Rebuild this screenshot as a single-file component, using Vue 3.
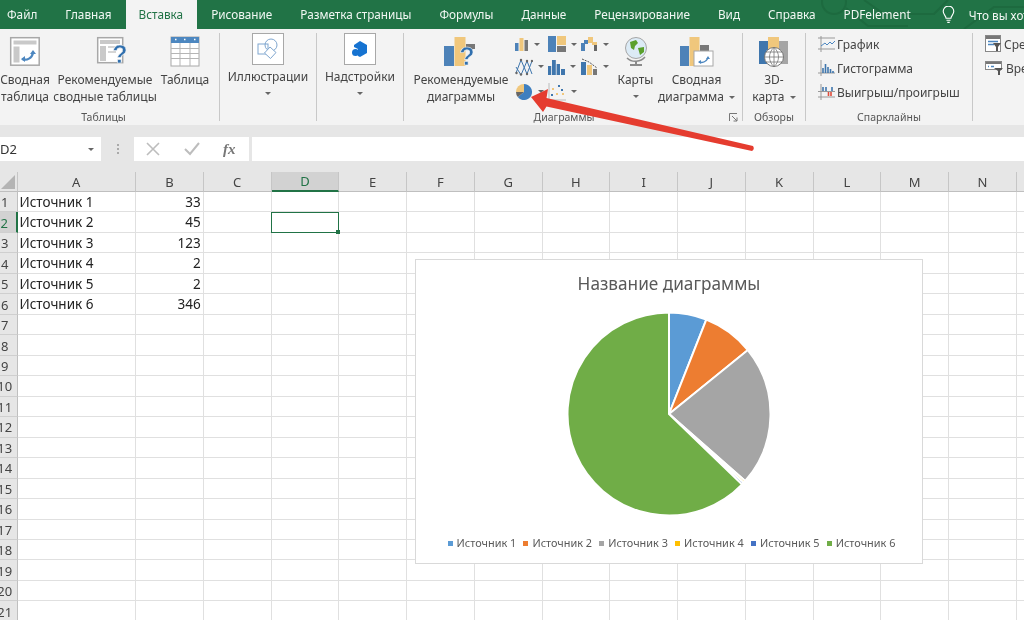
<script setup>
const tabs = ['Главная', 'Вставка', 'Рисование', 'Разметка страницы', 'Формулы', 'Данные', 'Рецензирование', 'Вид', 'Справка', 'PDFelement']
const columns = ['A', 'B', 'C', 'D', 'E', 'F', 'G', 'H', 'I', 'J', 'K', 'L', 'M', 'N', '']
const sheetData = [
  ['Источник 1', 33],
  ['Источник 2', 45],
  ['Источник 3', 123],
  ['Источник 4', 2],
  ['Источник 5', 2],
  ['Источник 6', 346]
]
const rows = Array.from({ length: 21 }, (_, i) => ({
  n: i + 1,
  a: sheetData[i] ? sheetData[i][0] : '',
  b: sheetData[i] ? sheetData[i][1] : ''
}))
const colors = ['#5b9bd5', '#ed7d31', '#a5a5a5', '#ffc000', '#4472c4', '#70ad47']
const total = sheetData.reduce((s, r) => s + r[1], 0)
let acc = 0
const slices = sheetData.map((r, i) => {
  const a0 = (acc / total) * Math.PI * 2
  acc += r[1]
  const a1 = (acc / total) * Math.PI * 2
  const R = 101.5
  const p = (a) => `${(110 + R * Math.sin(a)).toFixed(2)} ${(110 - R * Math.cos(a)).toFixed(2)}`
  return {
    d: `M110 110L${p(a0)}A${R} ${R} 0 ${a1 - a0 > Math.PI ? 1 : 0} 1 ${p(a1)}Z`,
    color: colors[i]
  }
})
const legend = sheetData.map((r, i) => ({ name: r[0], color: colors[i] }))
</script>

<template>
  <div class="app">
    <nav class="tabs">
      <span class="tab file">Файл</span>
      <span v-for="t in tabs" :key="t" class="tab" :class="{ active: t === 'Вставка' }">{{ t }}</span>
      <svg class="bulb" width="13" height="18" viewBox="0 0 16 22" fill="none" stroke="#fff" stroke-width="1.400">
        <path d="M5 15c0-3-3.500-4.500-3.500-8.500a6.500 6.500 0 0 1 13 0C14.500 10.500 11 12 11 15z" />
        <path d="M5.500 17.500h5M6.500 20h3" />
      </svg>
      <span class="tell">Что вы хотите сделать?</span>
      <svg class="circuit" width="230" height="29" viewBox="0 0 230 29" fill="none" stroke="#1d6a3f" stroke-width="2">
        <circle cx="40" cy="2" r="12" />
        <path d="M52 8l22 18h40M70 0l20 14h50l14-14M170 29l30-22h30" />
      </svg>
    </nav>

    <section class="ribbon">
      <div class="group g-tables">
        <div class="body">
          <div class="btn b-pivot">
            <svg class="icon" width="32" height="31" viewBox="0 0 32 31">
              <rect x="1.700" y="1.700" width="28.500" height="27.500" fill="#fff" stroke="#a8a8a8" stroke-width="1.500" />
              <rect x="4.500" y="4.500" width="23" height="4" fill="#c9c9c9" />
              <rect x="4.500" y="10.500" width="6" height="16" fill="#c9c9c9" />
              <path d="M13 23c5 2 10-1 11-6" fill="none" stroke="#4d87c0" stroke-width="2.200" />
              <path d="M21 18l3-4 3 4zM16 20l-4 3 4 3z" fill="#4d87c0" />
            </svg>
            <span>Сводная</span><span>таблица</span>
          </div>
          <div class="btn b-recpivot">
            <svg class="icon" width="34" height="31" viewBox="0 0 34 31">
              <rect x="1.700" y="1.700" width="25" height="25" fill="#fff" stroke="#a8a8a8" stroke-width="1.500" />
              <rect x="4" y="4" width="20" height="4" fill="#c9c9c9" />
              <rect x="4" y="10" width="6" height="15" fill="#c9c9c9" />
              <rect x="12" y="10" width="10" height="2" fill="#d5d5d5" />
              <rect x="12" y="15" width="8" height="2" fill="#d5d5d5" />
              <text x="24" y="27" text-anchor="middle" class="qm">?</text>
            </svg>
            <span>Рекомендуемые</span><span>сводные таблицы</span>
          </div>
          <div class="btn b-table">
            <svg class="icon" width="30" height="31" viewBox="0 0 30 31">
              <rect x="1" y="1" width="28" height="29" fill="#fff" stroke="#a8a8a8" />
              <rect x="1" y="1" width="28" height="6" fill="#4d87c0" />
              <path d="M1 12.500h28M1 17.500h28M1 22.500h28M10 7v23M20 7v23" stroke="#b5b5b5" fill="none" />
              <path d="M5 3.500h1.500M14 3.500h1.500M24 3.500h1.500" stroke="#fff" fill="none" stroke-width="1.500" />
            </svg>
            <span>Таблица</span>
          </div>
        </div>
        <div class="label l-tables">Таблицы</div>
      </div>
      <i class="sep"></i>

      <div class="group g-ill">
        <div class="body">
          <div class="btn boxed">
            <span class="box">
              <svg width="24" height="24" viewBox="0 0 24 24" fill="none" stroke="#7fa6cf" stroke-width="1">
                <rect x="2" y="7" width="10" height="10" />
                <circle cx="15" cy="8" r="6" />
                <path d="M14 10l6 5.500-5.500 6-6-5.500z" fill="#fff" />
              </svg>
            </span>
            <span>Иллюстрации</span>
            <i class="caret cap"></i>
          </div>
        </div>
      </div>
      <i class="sep"></i>

      <div class="group g-add">
        <div class="body">
          <div class="btn boxed">
            <span class="box">
              <svg width="18" height="18" viewBox="0 0 18 18" fill="#1673d1">
                <path d="M9 1l7 4v8l-7 4-2-1V9L3 7V5z" />
                <circle cx="4.500" cy="12.500" r="3.500" />
              </svg>
            </span>
            <span>Надстройки</span>
            <i class="caret cap"></i>
          </div>
        </div>
      </div>
      <i class="sep"></i>

      <div class="group g-charts">
        <div class="body">
          <div class="btn b-recchart">
            <svg class="icon" width="34" height="31" viewBox="0 0 34 31">
              <rect x="0" y="10" width="10" height="20" fill="#4d82b8" />
              <rect x="10.500" y="1" width="11" height="29" fill="#f0c77c" />
              <rect x="22" y="8" width="9" height="5" fill="#777" />
              <text x="23" y="29" text-anchor="middle" class="qm">?</text>
            </svg>
            <span>Рекомендуемые</span><span>диаграммы</span>
          </div>
          <div class="mini-grid">
            <div class="mini">
              <svg width="14" height="15" viewBox="0 0 14 15"><rect y="6" width="3.500" height="8" fill="#4d82b8" /><rect x="4.500" y="1" width="4" height="13" fill="#f0c77c" /><rect x="9.500" y="3" width="3.500" height="11" fill="#777" /></svg>
              <i class="caret"></i>
            </div>
            <div class="mini">
              <svg width="18" height="16" viewBox="0 0 18 16"><rect width="8" height="16" fill="#4d82b8" /><rect x="9" width="9" height="9" fill="#f0c77c" /><rect x="9" y="10" width="9" height="6" fill="#777" /></svg>
              <i class="caret"></i>
            </div>
            <div class="mini">
              <svg width="17" height="16" viewBox="0 0 17 16"><rect y="7" width="4" height="8" fill="#4d82b8" /><rect x="3" y="4" width="4" height="4" fill="#4d82b8" /><rect x="7" y="1" width="5" height="6" fill="#f0c77c" /><rect x="11" y="6" width="5" height="3" fill="#f0c77c" /><rect x="13" y="9" width="3" height="6" fill="#666" /></svg>
              <i class="caret"></i>
            </div>
            <div class="mini">
              <svg width="18" height="18" viewBox="0 0 18 18" fill="none" stroke="#3f76ad" stroke-width="1">
                <path d="M1 15L6 2l6 14 5-13M1 9l5 8 6-14 5 13" />
                <g fill="#666" stroke="none"><circle cx="1.500" cy="15" r="1.200" /><circle cx="6" cy="2" r="1.200" /><circle cx="12" cy="16" r="1.200" /><circle cx="17" cy="3" r="1.200" /><circle cx="6" cy="16.500" r="1.200" /><circle cx="12" cy="3" r="1.200" /></g>
              </svg>
              <i class="caret"></i>
            </div>
            <div class="mini">
              <svg width="17" height="16" viewBox="0 0 17 16" fill="#3f76ad"><rect y="7" width="3.200" height="9" /><rect x="4" y="1" width="3.800" height="15" /><rect x="8.600" y="5" width="3.400" height="11" /><rect x="13" y="10" width="4" height="6" /></svg>
              <i class="caret"></i>
            </div>
            <div class="mini">
              <svg width="17" height="17" viewBox="0 0 17 17"><rect y="4" width="5" height="13" fill="#3f76ad" /><rect x="6" y="7" width="5" height="10" fill="#f0c77c" /><rect x="12" y="11" width="4" height="6" fill="#777" /><path d="M1 1l7 3 8 6" stroke="#555" fill="none" stroke-dasharray="2 1" /></svg>
              <i class="caret"></i>
            </div>
            <div class="mini">
              <svg width="18" height="18" viewBox="0 0 18 18">
                <path d="M9 9V1a8 8 0 1 1-6.200 13z" fill="#3f7fbf" />
                <path d="M9 9H1a8 8 0 0 1 8-8z" fill="#f0c77c" />
                <path d="M9 9l-6.200 5A8 8 0 0 1 1 9z" fill="#666" />
              </svg>
              <i class="caret"></i>
            </div>
            <div class="mini">
              <svg width="18" height="18" viewBox="0 0 18 18">
                <path d="M1 0v17h17" stroke="#bbb" fill="none" />
                <g fill="#f0c77c"><rect x="4" y="5" width="2" height="2" /><rect x="8" y="10" width="2" height="2" /><rect x="14" y="10" width="2" height="2" /></g>
                <g fill="#3f76ad"><rect x="3" y="11" width="2" height="2" /><rect x="10" y="2" width="2" height="2" /><rect x="13" y="6" width="2" height="2" /></g>
              </svg>
              <i class="caret"></i>
            </div>
          </div>
          <div class="btn b-maps">
            <svg class="icon" width="26" height="31" viewBox="0 0 26 31">
              <circle cx="13" cy="12" r="10.500" fill="#dcebf6" stroke="#a6a6a6" />
              <path d="M7 6l6-2 2 3-3 3-1 4-3-2zM15 12l6-1 0 5-4 3z" fill="#5aa02c" />
              <path d="M4 22c5 5 14 4 18-1" fill="none" stroke="#8a8a8a" stroke-width="1.500" />
              <path d="M13 25v3M7 29h12" stroke="#8a8a8a" stroke-width="2" />
            </svg>
            <span>Карты</span>
            <i class="caret cap2"></i>
          </div>
          <div class="btn b-pchart">
            <svg class="icon" width="34" height="31" viewBox="0 0 34 31">
              <rect x="0" y="10" width="9" height="20" fill="#4d82b8" />
              <rect x="9.500" y="1" width="10" height="29" fill="#f0c77c" />
              <rect x="20" y="9" width="9" height="6" fill="#777" />
              <rect x="14" y="15" width="19" height="15" fill="#fff" stroke="#a8a8a8" />
              <path d="M19 26c3 1 7 0 9-4" fill="none" stroke="#4d87c0" stroke-width="1.600" />
              <path d="M26 23l2-3 2 3zM21 24l-3 2 3 2z" fill="#4d87c0" />
            </svg>
            <span>Сводная</span>
            <span>диаграмма <i class="caret inl"></i></span>
          </div>
        </div>
        <div class="label-row">
          <div class="label l-charts">Диаграммы</div>
          <svg class="launcher" width="9" height="9" viewBox="0 0 9 9" fill="none" stroke="#777"><path d="M.5 8V.5H8M3 3l5 5M8 4.500V8H4.500" /></svg>
        </div>
      </div>
      <i class="sep"></i>

      <div class="group g-tours">
        <div class="body">
          <div class="btn b-tours">
            <svg class="icon" width="32" height="31" viewBox="0 0 32 31">
              <rect x="1" y="5" width="9" height="23" fill="#3f76ad" />
              <rect x="10" y="1" width="11" height="20" fill="#f0c77c" />
              <rect x="21" y="5" width="9" height="23" fill="#a5a5a5" />
              <circle cx="16" cy="21" r="9.500" fill="#fff" stroke="#777" />
              <path d="M6.500 21h19M16 11.500v19M8 16h16M8 26h16M16 11.500c-6 5-6 14 0 19M16 11.500c6 5 6 14 0 19" fill="none" stroke="#777" stroke-width=".8" />
            </svg>
            <span>3D-</span>
            <span>карта <i class="caret inl"></i></span>
          </div>
        </div>
        <div class="label">Обзоры</div>
      </div>
      <i class="sep"></i>

      <div class="group g-spark">
        <div class="body list">
          <div class="line">
            <svg width="17" height="16" viewBox="0 0 17 16" fill="none"><path d="M3 0v16M0 13h17M0 2h17" stroke="#999" /><path d="M3 10l4-3 2 2 3-3 2 2 3-3" stroke="#4d87c0" /></svg>
            <span>График</span>
          </div>
          <div class="line">
            <svg width="17" height="16" viewBox="0 0 17 16" fill="none"><path d="M3 0v16M0 13h17" stroke="#999" /><path d="M5 13V8M7.500 13V4M10 13V7M12.500 13V9M15 13v-2" stroke="#3f76ad" stroke-width="1.600" /></svg>
            <span>Гистограмма</span>
          </div>
          <div class="line">
            <svg width="17" height="16" viewBox="0 0 17 16" fill="none"><path d="M3 0v16M0 13h17M0 7.500h17" stroke="#999" /><path d="M5 3v4M8 3v4M14 3v4" stroke="#3f76ad" stroke-width="1.600" /><path d="M10.500 8v4M13 8v4" stroke="#e04b3a" stroke-width="1.600" /></svg>
            <span>Выигрыш/проигрыш</span>
          </div>
        </div>
        <div class="label">Спарклайны</div>
      </div>
      <i class="sep"></i>

      <div class="group g-filter">
        <div class="body list">
          <div class="line">
            <svg width="17" height="18" viewBox="0 0 17 18" fill="none"><rect x=".5" y=".5" width="15" height="16" fill="#fff" stroke="#888" /><rect x="1" y="1" width="14" height="3" fill="#777" /><path d="M3 6.500h10M3 9.500h6" stroke="#4d87c0" stroke-width="1.500" /><path d="M8 8h8l-3 4v4h-2v-4z" fill="#555" /></svg>
            <span>Срез</span>
          </div>
          <div class="line">
            <svg width="19" height="14" viewBox="0 0 19 14" fill="none"><rect x=".5" y=".5" width="16" height="8" fill="#fff" stroke="#888" /><rect x="1" y="1" width="15" height="2" fill="#777" /><path d="M3 5.500h1M6 5.500h3" stroke="#4d87c0" stroke-width="1.500" /><path d="M9 7h9l-3 3v4h-2v-4z" fill="#555" /></svg>
            <span>Временная шкала</span>
          </div>
        </div>
      </div>
    </section>

    <section class="formula">
      <div class="name">D2<i class="caret"></i></div>
      <div class="dots"><i></i><i></i><i></i></div>
      <div class="fx-box">
        <svg width="14" height="14" viewBox="0 0 14 14" fill="none" stroke="#bdbdbd" stroke-width="1.600"><path d="M1 1l12 12M13 1L1 13" /></svg>
        <svg width="16" height="14" viewBox="0 0 16 14" fill="none" stroke="#bdbdbd" stroke-width="2"><path d="M1 7l5 5L15 1" /></svg>
        <span class="fx">fx</span>
      </div>
      <div class="input"></div>
    </section>

    <section class="sheet">
      <div class="hd corner"><i></i></div>
      <div v-for="c in columns" :key="c" class="hd col" :class="{ sel: c === 'D' }">{{ c }}</div>
      <template v-for="r in rows" :key="r.n">
        <div class="hd num" :class="{ sel: r.n === 2 }">{{ r.n }}</div>
        <div class="cell">{{ r.a }}</div>
        <div class="cell right">{{ r.b }}</div>
        <div v-for="c in columns.slice(2)" :key="c" class="cell" :class="{ active: r.n === 2 && c === 'D' }"></div>
      </template>
    </section>

    <figure class="chart">
      <figcaption>Название диаграммы</figcaption>
      <svg class="pie" width="220" height="220" viewBox="0 0 220 220">
        <path v-for="(s, i) in slices" :key="i" :d="s.d" :fill="s.color" stroke="#fff" stroke-width="2" />
      </svg>
      <div class="legend">
        <span v-for="l in legend" :key="l.name"><i :style="{ background: l.color }"></i>{{ l.name }}</span>
      </div>
    </figure>

    <svg class="arrow" width="1024" height="170" viewBox="0 0 1024 170">
      <path d="M531 97L548 89L546.500 98L753 146Q755 149 752 151L546.500 106.500L543 112Z" fill="#e53c2f" />
    </svg>
  </div>
</template>

<style scoped>
.app {
  position: relative;
  width: 1024px;
  height: 620px;
  overflow: hidden;
  background: #fff;
  font-family: "Noto Sans", "Open Sans", sans-serif;
  color: #444;
  filter: blur(0.4px);
}
i { display: block; }

.tabs {
  position: relative;
  display: flex;
  align-items: center;
  height: 29px;
  padding-left: 7px;
  background: #217346;
  color: #f1f7f3;
  font-size: 11.750px;
  white-space: nowrap;
}
.tab { padding: 0 14px; line-height: 29px; position: relative; z-index: 1; flex: none; }
.tab.file { padding: 0 14px 0 0; }
.tab.active { background: #f3f3f3; color: #217346; padding: 0 14px 0 13px; }
.bulb { margin-left: 17px; position: relative; z-index: 1; flex: none; }
.tell { margin-left: 14px; position: relative; z-index: 1; flex: none; }
.circuit { position: absolute; right: 0; top: 0; }

.ribbon {
  display: flex;
  height: 96px;
  background: #f3f3f3;
  color: #444;
  font-size: 12px;
  line-height: 17px;
  white-space: nowrap;
}
.sep { width: 1px; margin: 4px 0 4px; background: #c8c8c8; flex: none; }
.group { display: flex; flex-direction: column; flex: none; overflow: hidden; }
.body { flex: 1; display: flex; min-height: 0; }
.label {
  text-align: center;
  font-size: 10.500px;
  line-height: 14px;
  color: #555;
  padding-top: 4px;
  height: 19px;
  box-sizing: border-box;
}
.g-tables { width: 219px; }
.g-ill { width: 96px; }
.g-add { width: 86px; }
.g-charts { width: 338px; }
.g-tours { width: 62px; }
.g-spark { width: 166px; }
.g-filter { flex: 1; }
.l-tables { padding-right: 12px; }

.btn { display: flex; flex-direction: column; align-items: center; flex: none; padding-top: 7px; }
.icon { display: block; margin-bottom: 4px; flex: none; height: 31px; }
.b-pivot { width: 50px; }
.b-recpivot { width: 110px; }
.b-table { width: 50px; }
.b-recpivot .icon { margin-left: 16px; }
.b-recchart { width: 102px; margin-left: 6px; }
.b-maps { width: 44px; }
.b-pchart { width: 78px; }
.b-tours { width: 62px; }
.qm { font: 700 25px "Liberation Sans", sans-serif; fill: #2f6fae; stroke: #f3f3f3; stroke-width: .6px; }

.boxed { width: 100%; padding-top: 4px; }
.box {
  display: flex;
  align-items: center;
  justify-content: center;
  width: 32px;
  height: 32px;
  background: #fff;
  border: 1.500px solid #a8a8a8;
  box-sizing: border-box;
  margin-bottom: 3px;
}
.caret { width: 0; height: 0; border: 3px solid transparent; border-top: 3.500px solid #666; border-bottom: 0; }
.cap { margin-top: 7px; }
.cap2 { margin-top: 7px; }
.caret.inl { display: inline-block; vertical-align: middle; margin-left: 2px; }

.mini-grid {
  display: grid;
  grid-template-columns: repeat(3, 33px);
  grid-template-rows: 22px 23px 27px;
  margin: 4px 0 0 2.500px;
  flex: none;
  width: 99px;
}
.mini { display: flex; align-items: center; gap: 5px; }
.mini svg { flex: none; }
.label-row { display: flex; align-items: flex-start; height: 19px; }
.l-charts { flex: 1; }
.launcher { margin: 7px 4px 0 5px; }

.list { flex-direction: column; padding: 3px 0 0 12px; }
.line { display: flex; align-items: center; gap: 2px; height: 24px; }
.line svg { flex: none; }

.formula {
  display: flex;
  align-items: center;
  height: 47px;
  padding: 12px 0 11px;
  box-sizing: border-box;
  background: #e6e6e6;
}
.name {
  width: 101px;
  height: 24px;
  background: #fff;
  font-size: 13px;
  color: #333;
  display: flex;
  align-items: center;
  justify-content: space-between;
  padding-right: 7px;
  box-sizing: border-box;
  flex: none;
}
.dots { width: 33px; display: flex; flex-direction: column; align-items: center; gap: 2px; flex: none; }
.dots i { width: 2px; height: 2px; background: #aaa; }
.fx-box {
  width: 115px;
  height: 24px;
  background: #fff;
  display: flex;
  align-items: center;
  padding-left: 12px;
  box-sizing: border-box;
  gap: 24px;
  flex: none;
}
.fx { font: italic 700 15px "Liberation Serif", serif; color: #777; margin-left: -1px; }
.input { flex: 1; height: 24px; margin-left: 3px; background: #fff; }

.sheet {
  display: grid;
  grid-template-columns: 24.500px 118.500px repeat(14, 67.750px);
  grid-template-rows: 20px repeat(21, 20.470px);
  margin-left: -7px;
  font-size: 13.500px;
  color: #222;
}
.hd {
  background: #e6e6e6;
  display: flex;
  align-items: center;
  justify-content: center;
  color: #444;
  font-size: 13px;
  box-sizing: border-box;
}
.col { border-right: 1px solid #c6c6c6; border-bottom: 1px solid #bfbfbf; }
.col.sel { background: #d2d2d2; border-bottom: 2px solid #217346; color: #217346; }
.num { border-bottom: 1px solid #cfcfcf; border-right: 1px solid #bfbfbf; padding-top: 1px; }
.num.sel { background: #d2d2d2; border-right: 2px solid #217346; color: #217346; }
.corner { position: relative; border-right: 1px solid #c6c6c6; border-bottom: 1px solid #bfbfbf; }
.corner i {
  position: absolute;
  right: 2px;
  bottom: 2px;
  width: 0;
  height: 0;
  border-style: solid;
  border-width: 0 0 14px 14px;
  border-color: transparent transparent #b4b4b4 transparent;
}
.cell {
  border-right: 1px solid #e0e0e0;
  border-bottom: 1px solid #e0e0e0;
  box-sizing: border-box;
  padding: 0 2px;
  line-height: 21px;
  white-space: nowrap;
}
.cell.right { text-align: right; }
.cell.active { position: relative; }
.cell.active::before {
  content: "";
  position: absolute;
  inset: 0 -1px -1px -1px;
  border: 1.500px solid #217346;
}
.cell.active::after {
  content: "";
  position: absolute;
  right: -2px;
  bottom: -2px;
  width: 4px;
  height: 4px;
  background: #217346;
}

.chart {
  position: absolute;
  left: 415px;
  top: 259px;
  width: 508px;
  height: 305px;
  margin: 0;
  box-sizing: border-box;
  background: #fff;
  border: 1px solid #d9d9d9;
  display: flex;
  flex-direction: column;
  align-items: center;
  padding-top: 12px;
  color: #595959;
}
.chart figcaption { font-size: 17.200px; line-height: 24px; }
.pie { margin-top: 8px; flex: none; }
.legend { display: flex; gap: 7.200px; margin: 11px 0 0 5px; font-size: 10.900px; line-height: 16px; }
.legend span { display: flex; align-items: center; gap: 4px; white-space: nowrap; }
.legend i { width: 5px; height: 5px; }

.arrow { position: absolute; left: 0; top: 0; pointer-events: none; }
</style>
